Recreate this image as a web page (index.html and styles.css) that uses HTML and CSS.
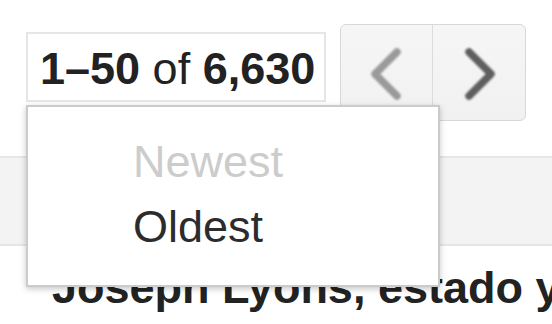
FILE: index.html
```html
<!DOCTYPE html>
<html>
<head>
<meta charset="utf-8">
<link rel="stylesheet" href="styles.css">
</head>
<body>
<div class="page">
  <div class="toolbar">
    <div class="counter"><span class="num">1–50</span>&nbsp;of&nbsp;<span class="num">6,630</span></div>
    <div class="pager">
      <div class="pbtn prev">
        <svg width="40" height="60" viewBox="0 0 40 60">
          <defs><filter id="b1" x="-50%" y="-50%" width="200%" height="200%"><feGaussianBlur stdDeviation="1.3"/></filter></defs>
          <polyline points="30,9 8,31 30,53" fill="none" stroke="#9a9a9a" stroke-width="7.5" stroke-linecap="round" stroke-linejoin="round" filter="url(#b1)"/>
        </svg>
      </div>
      <div class="pbtn next">
        <svg width="40" height="60" viewBox="0 0 40 60">
          <defs><filter id="b2" x="-50%" y="-50%" width="200%" height="200%"><feGaussianBlur stdDeviation="1.3"/></filter></defs>
          <polyline points="10,9 32,31 10,53" fill="none" stroke="#5e5e5e" stroke-width="7.5" stroke-linecap="round" stroke-linejoin="round" filter="url(#b2)"/>
        </svg>
      </div>
    </div>
  </div>
  <div class="band"></div>
  <div class="subject">Joseph Lyons, estado y</div>

  <div class="menu">
    <div class="item disabled">Newest</div>
    <div class="item">Oldest</div>
  </div>
</div>
</body>
</html>
```

FILE: styles.css
```css
html, body {
  margin: 0;
  padding: 0;
  background: #ffffff;
}

body {
  width: 552px;
  height: 324px;
  overflow: hidden;
  font-family: "Liberation Sans", Arial, Helvetica, sans-serif;
}

.page {
  position: relative;
  width: 552px;
  height: 324px;
  overflow: hidden;
}

.toolbar {
  display: flex;
  align-items: flex-start;
  padding: 24px 0 0 26px;
}

.counter {
  box-sizing: border-box;
  margin-top: 8px;
  width: 300px;
  height: 70px;
  border: 2px solid #e6e6e6;
  display: flex;
  align-items: center;
  padding: 4px 0 0 12px;
  font-size: 45px;
  color: #222222;
  white-space: nowrap;
}

.num {
  font-weight: bold;
}

.pager {
  box-sizing: border-box;
  margin-left: 14px;
  height: 97px;
  display: flex;
  border: 1px solid #d8d8d8;
  border-radius: 6px;
  background: linear-gradient(#f6f6f6, #f1f1f1);
}

.pbtn {
  display: flex;
  align-items: center;
  justify-content: center;
}

.prev {
  width: 91px;
  border-right: 1px solid #dcdcdc;
}

.next {
  width: 92px;
}

.band {
  margin-top: 35px;
  height: 86px;
  border-top: 2px solid #e6e6e6;
  border-bottom: 2px solid #e6e6e6;
  background: #f3f3f3;
}

.subject {
  margin-top: 16px;
  padding-left: 52px;
  font-size: 45px;
  font-weight: bold;
  color: #222222;
  white-space: nowrap;
}

.menu {
  position: absolute;
  left: 26px;
  top: 105px;
  box-sizing: border-box;
  width: 414px;
  height: 182px;
  border: 2px solid #cbcbcb;
  background: #ffffff;
  box-shadow: 0 2px 6px rgba(0, 0, 0, 0.22);
  padding: 22px 0 0 105px;
}

.item {
  font-size: 45px;
  line-height: 65px;
  color: #2c2c2c;
}

.item.disabled {
  color: #cccccc;
}
```
